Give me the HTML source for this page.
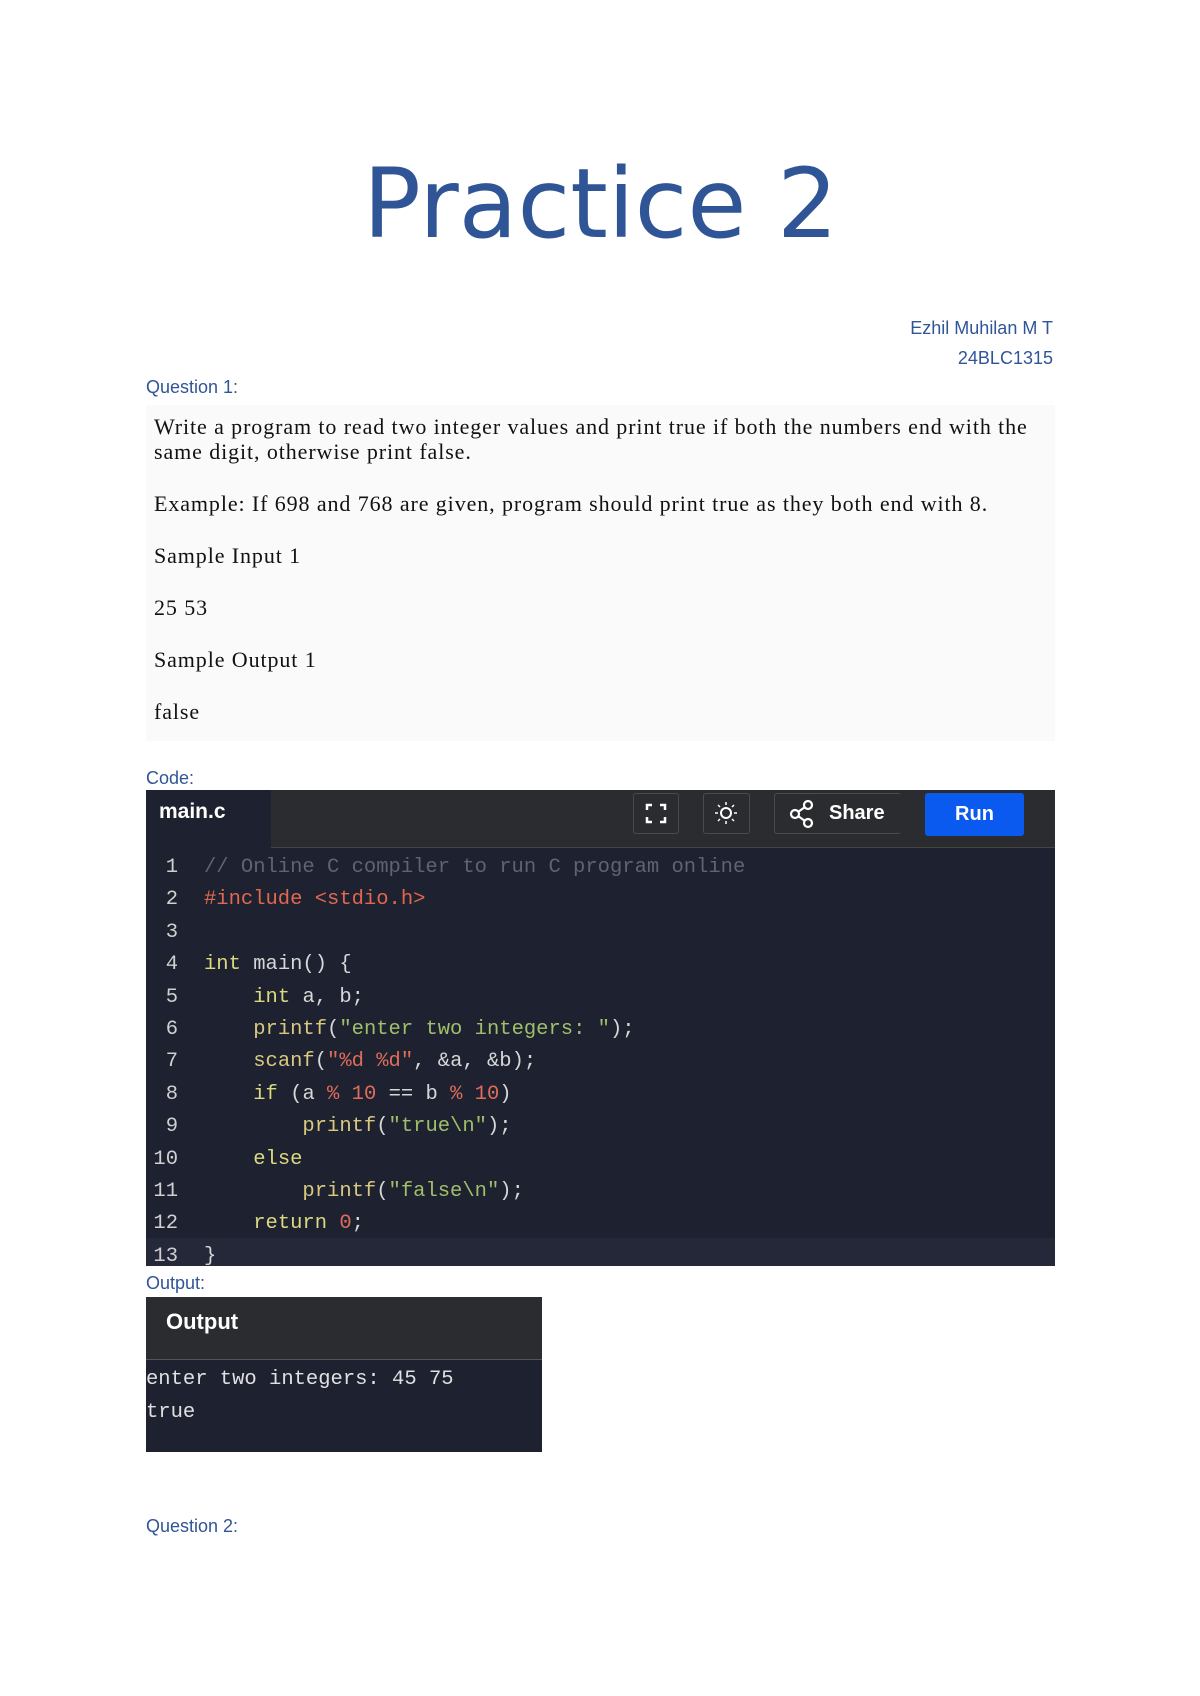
<!DOCTYPE html>
<html><head><meta charset="utf-8"><style>
body{margin:0;background:#fff;width:1200px;height:1696px;position:relative;font-family:"Liberation Sans",sans-serif;overflow:hidden}
.a{position:absolute;white-space:pre}
.blue{color:#2f5597}
.lbl{font-size:18px;color:#2f5597}
.q{position:absolute;left:146px;top:405px;width:909px;height:336px;background:#fafafa}
.serif{font-family:"Liberation Serif",serif;font-size:22px;letter-spacing:0.9px;color:#111}
.ed{position:absolute;left:146px;top:790px;width:909px;height:476px;background:#1d2130}
.bar{position:absolute;left:0;top:0;width:909px;height:57px;background:#2b2c30;border-bottom:1px solid #444}
.tab{position:absolute;left:0;top:0;width:125px;height:58px;background:#1d2130;color:#fff;font-weight:bold;font-size:21px;line-height:44px;padding-left:13px;box-sizing:border-box}
.btn{position:absolute;top:3px;height:41px;border:1px solid #4a4b50;border-radius:3px;box-sizing:border-box}
.mono{font-family:"Liberation Mono",monospace;font-size:20.5px}
.ln{position:absolute;width:32px;text-align:right;color:#d0d0d0}
.cm{color:#5d6472}.inc{color:#e0684f}.kw{color:#dcd97f}.fn{color:#d9c97f}.st{color:#9fbf6a}.nu{color:#e06c5a}.w{color:#d7d7d7}
</style></head><body>
<div class="a blue" style="left:363px;top:148px;font-size:96px;line-height:112px;font-family:'DejaVu Sans',sans-serif">Practice 2</div>
<div class="a lbl" style="right:147px;top:318px">Ezhil Muhilan M T</div>
<div class="a lbl" style="right:147px;top:348px">24BLC1315</div>
<div class="a lbl" style="left:146px;top:377px">Question 1:</div>
<div class="q"></div>
<div class="a serif" style="left:154px;top:414px">Write a program to read two integer values and print true if both the numbers end with the</div>
<div class="a serif" style="left:154px;top:439px">same digit, otherwise print false.</div>
<div class="a serif" style="left:154px;top:491px">Example: If 698 and 768 are given, program should print true as they both end with 8.</div>
<div class="a serif" style="left:154px;top:543px">Sample Input 1</div>
<div class="a serif" style="left:154px;top:595px">25 53</div>
<div class="a serif" style="left:154px;top:647px">Sample Output 1</div>
<div class="a serif" style="left:154px;top:699px">false</div>
<div class="a lbl" style="left:146px;top:768px">Code:</div>
<div class="ed">
 <div class="bar"></div>
 <div class="tab">main.c</div>
 <div class="btn" style="left:487px;width:46px"><svg width="44" height="39" viewBox="0 0 44 39"><path d="M13 16v-5h5M26 11h5v5M31 23v5h-5M18 28h-5v-5" stroke="#fff" stroke-width="2.5" fill="none"/></svg></div>
 <div class="btn" style="left:557px;width:47px"><svg width="45" height="39" viewBox="0 0 45 39"><circle cx="22" cy="19" r="5" stroke="#fff" stroke-width="2" fill="none"/><path d="M22 8v3M22 27v3M11 19h3M30 19h3M14 11l2 2M28 25l2 2M14 27l2-2M28 13l2-2" stroke="#fff" stroke-width="1.5"/></svg></div>
 <div class="btn" style="left:628px;width:127px;border-right:none"><svg width="40" height="39" viewBox="0 0 40 39" style="position:absolute;left:8px;top:0"><circle cx="12" cy="20" r="4" stroke="#fff" stroke-width="2.2" fill="none"/><circle cx="25" cy="11" r="4" stroke="#fff" stroke-width="2.2" fill="none"/><circle cx="25" cy="29" r="4" stroke="#fff" stroke-width="2.2" fill="none"/><path d="M15 18l7-5M15 22l7 5" stroke="#fff" stroke-width="2.2"/></svg><span style="position:absolute;left:54px;top:8px;color:#fff;font-weight:bold;font-size:20px">Share</span></div>
 <div style="position:absolute;left:779px;top:3px;width:99px;height:43px;background:#0a5af0;border-radius:3px;color:#fff;font-weight:bold;font-size:20px;text-align:center;line-height:43px">Run</div>
 <div style="position:absolute;left:0;top:448px;width:909px;height:28px;background:#242838"></div>
 <div class="mono" style="position:absolute;left:0;top:62px;line-height:32.4px">
  <div class="ln" style="left:0;top:0">1<br>2<br>3<br>4<br>5<br>6<br>7<br>8<br>9<br>10<br>11<br>12<br>13</div>
  <div class="a" style="left:58px;top:0;line-height:32.4px"><span class="cm">// Online C compiler to run C program online</span>
<span class="inc">#include &lt;stdio.h&gt;</span>

<span class="kw">int</span> <span class="w">main() {</span>
    <span class="kw">int</span> <span class="w">a, b;</span>
    <span class="fn">printf</span><span class="w">(</span><span class="st">"enter two integers: "</span><span class="w">);</span>
    <span class="fn">scanf</span><span class="w">(</span><span class="nu">"%d %d"</span><span class="w">, &amp;a, &amp;b);</span>
    <span class="kw">if</span> <span class="w">(a </span><span class="nu">%</span><span class="nu"> 10</span><span class="w"> == b </span><span class="nu">% 10</span><span class="w">)</span>
        <span class="fn">printf</span><span class="w">(</span><span class="st">"true\n"</span><span class="w">);</span>
    <span class="kw">else</span>
        <span class="fn">printf</span><span class="w">(</span><span class="st">"false\n"</span><span class="w">);</span>
    <span class="kw">return</span> <span class="nu">0</span><span class="w">;</span>
<span class="w">}</span></div>
 </div>
</div>
<div class="a lbl" style="left:146px;top:1273px">Output:</div>
<div style="position:absolute;left:146px;top:1297px;width:396px;height:155px;background:#1d2130">
 <div style="height:62px;background:#2b2c30;border-bottom:1px solid #555;color:#fff;font-weight:bold;font-size:22px;line-height:50px;padding-left:20px">Output</div>
 <div class="a mono w" style="left:0;top:66px;line-height:33px;color:#e0e0e0">enter two integers: 45 75
true</div>
</div>
<div class="a lbl" style="left:146px;top:1516px">Question 2:</div>
</body></html>
